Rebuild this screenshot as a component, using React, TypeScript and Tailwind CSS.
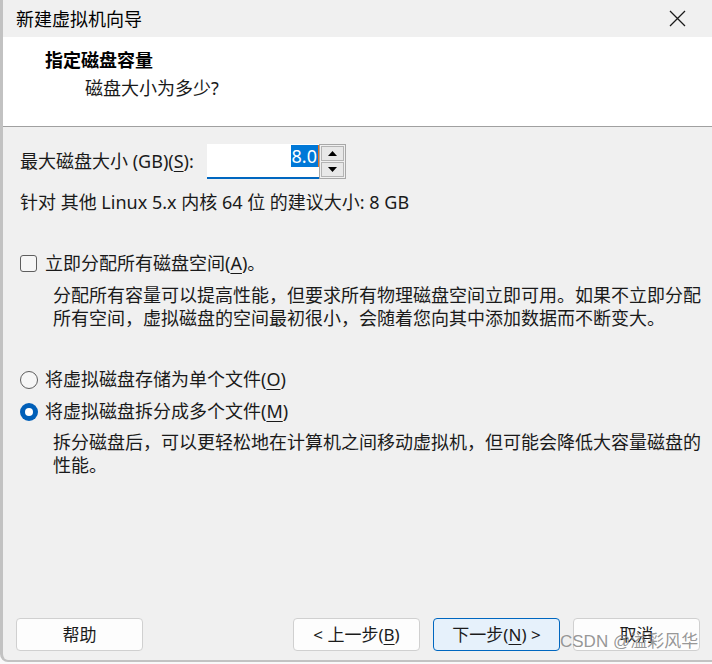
import React from "react";

const F = "font-['Noto_Sans','Noto_Sans_CJK_SC',sans-serif]";

function U({ c }: { c: string }) {
  return <span className="underline underline-offset-[3px] decoration-1">{c}</span>;
}

function Btn({
  children,
  primary,
  className = "",
}: {
  children: React.ReactNode;
  primary?: boolean;
  className?: string;
}) {
  return (
    <div
      className={`h-[33px] w-[127px] rounded-[4px] border flex items-center justify-center text-[17px] text-[#1b1b1b] ${
        primary ? "border-[#0067c0] bg-[#e6f1fb]" : "border-[#d0d0d0] bg-[#fdfdfd]"
      } ${className}`}
    >
      {children}
    </div>
  );
}

export default function App() {
  return (
    <div className={`w-[712px] h-[664px] bg-[#f9f9f9] overflow-hidden relative ${F}`}>
      <div className="h-[662px] border-l-[3px] border-b-[2px] border-[#c2c2c2] rounded-bl-[8px] bg-[#f0f0f0] flex flex-col overflow-hidden">
        {/* title bar */}
        <div className="h-[37px] shrink-0 flex items-center justify-between pl-[13px] pr-[26px] bg-[#f0f0f0]">
          <span className="text-[18px] text-black leading-none">新建虚拟机向导</span>
          <svg width="17" height="17" viewBox="0 0 17 17">
            <path d="M1 1 L16 16 M16 1 L1 16" stroke="#1a1a1a" strokeWidth="1.3" fill="none" />
          </svg>
        </div>
        {/* header */}
        <div className="h-[90px] shrink-0 bg-white border-b border-[#a0a0a0] pt-[11px]">
          <div className="pl-[42px] text-[18px] font-bold leading-[24px] text-black">指定磁盘容量</div>
          <div className="pl-[82px] mt-[4px] text-[18px] leading-[24px] text-[#1a1a1a]">磁盘大小为多少?</div>
        </div>
        {/* body */}
        <div className="flex-1 flex flex-col pl-[17px] text-[18px] text-[#1a1a1a]">
          <div className="mt-[17px] flex items-center h-[35px]">
            <span className="w-[187px] leading-[23px] whitespace-nowrap">
              最大磁盘大小 (GB)(<U c="S" />):
            </span>
            <div className="w-[112px] h-[35px] bg-white border-b-2 border-[#0067c0] flex items-start justify-end pt-[1px]">
              <span className="bg-[#0078d7] text-white text-[18px] leading-[22px] px-[1px]">8.0</span>
              <span className="w-[1px] h-[22px] bg-[#e07020]" />
            </div>
            <div className="w-[27px] h-[35px] border border-[#a8a8a8] flex flex-col p-[1px] gap-[1px] bg-[#f0f0f0]">
              <div className="flex-1 border border-[#b4b4b4] bg-[#e8e8e8] flex items-center justify-center">
                <svg width="9" height="5" viewBox="0 0 9 5"><path d="M4.5 0 L9 5 L0 5 Z" fill="#000" /></svg>
              </div>
              <div className="flex-1 border border-[#b4b4b4] bg-[#e8e8e8] flex items-center justify-center">
                <svg width="9" height="5" viewBox="0 0 9 5"><path d="M0 0 L9 0 L4.5 5 Z" fill="#000" /></svg>
              </div>
            </div>
          </div>
          <div className="mt-[12px] leading-[23px]">针对 其他 Linux 5.x 内核 64 位 的建议大小: 8 GB</div>

          <div className="mt-[38px] flex items-center h-[23px]">
            <div className="w-[17px] h-[17px] rounded-[3px] border border-[#5e5e5e] bg-[#f6f6f6]" />
            <span className="ml-[8px]">
              立即分配所有磁盘空间(<U c="A" />)。
            </span>
          </div>
          <div className="mt-[9px] pl-[33px] leading-[23px] whitespace-nowrap">
            分配所有容量可以提高性能，但要求所有物理磁盘空间立即可用。如果不立即分配
            <br />
            所有空间，虚拟磁盘的空间最初很小，会随着您向其中添加数据而不断变大。
          </div>

          <div className="mt-[38px] flex items-center h-[23px]">
            <div className="w-[18px] h-[18px] rounded-full border border-[#5e5e5e] bg-[#f6f6f6]" />
            <span className="ml-[7px]">
              将虚拟磁盘存储为单个文件(<U c="O" />)
            </span>
          </div>
          <div className="mt-[9px] flex items-center h-[23px]">
            <div className="w-[18px] h-[18px] rounded-full bg-[#005fb8] flex items-center justify-center">
              <div className="w-[8px] h-[8px] rounded-full bg-white" />
            </div>
            <span className="ml-[7px]">
              将虚拟磁盘拆分成多个文件(<U c="M" />)
            </span>
          </div>
          <div className="mt-[8px] pl-[33px] leading-[23px] whitespace-nowrap">
            拆分磁盘后，可以更轻松地在计算机之间移动虚拟机，但可能会降低大容量磁盘的
            <br />
            性能。
          </div>

          <div className="mt-auto mb-[9px] flex items-center">
            <Btn className="ml-[-4px]">帮助</Btn>
            <Btn className="ml-[150px]">
              &lt; 上一步(<U c="B" />)
            </Btn>
            <Btn primary className="ml-[13px]">
              下一步(<U c="N" />) &gt;
            </Btn>
            <Btn className="ml-[13px]">取消</Btn>
          </div>
        </div>
      </div>
      <div className="absolute left-[560px] top-[631px] text-[17px] leading-[22px] text-[#8a8a8a]/90 font-['Liberation_Sans','Noto_Sans_CJK_SC',sans-serif] whitespace-nowrap">
        CSDN @溢彩风华
      </div>
    </div>
  );
}
